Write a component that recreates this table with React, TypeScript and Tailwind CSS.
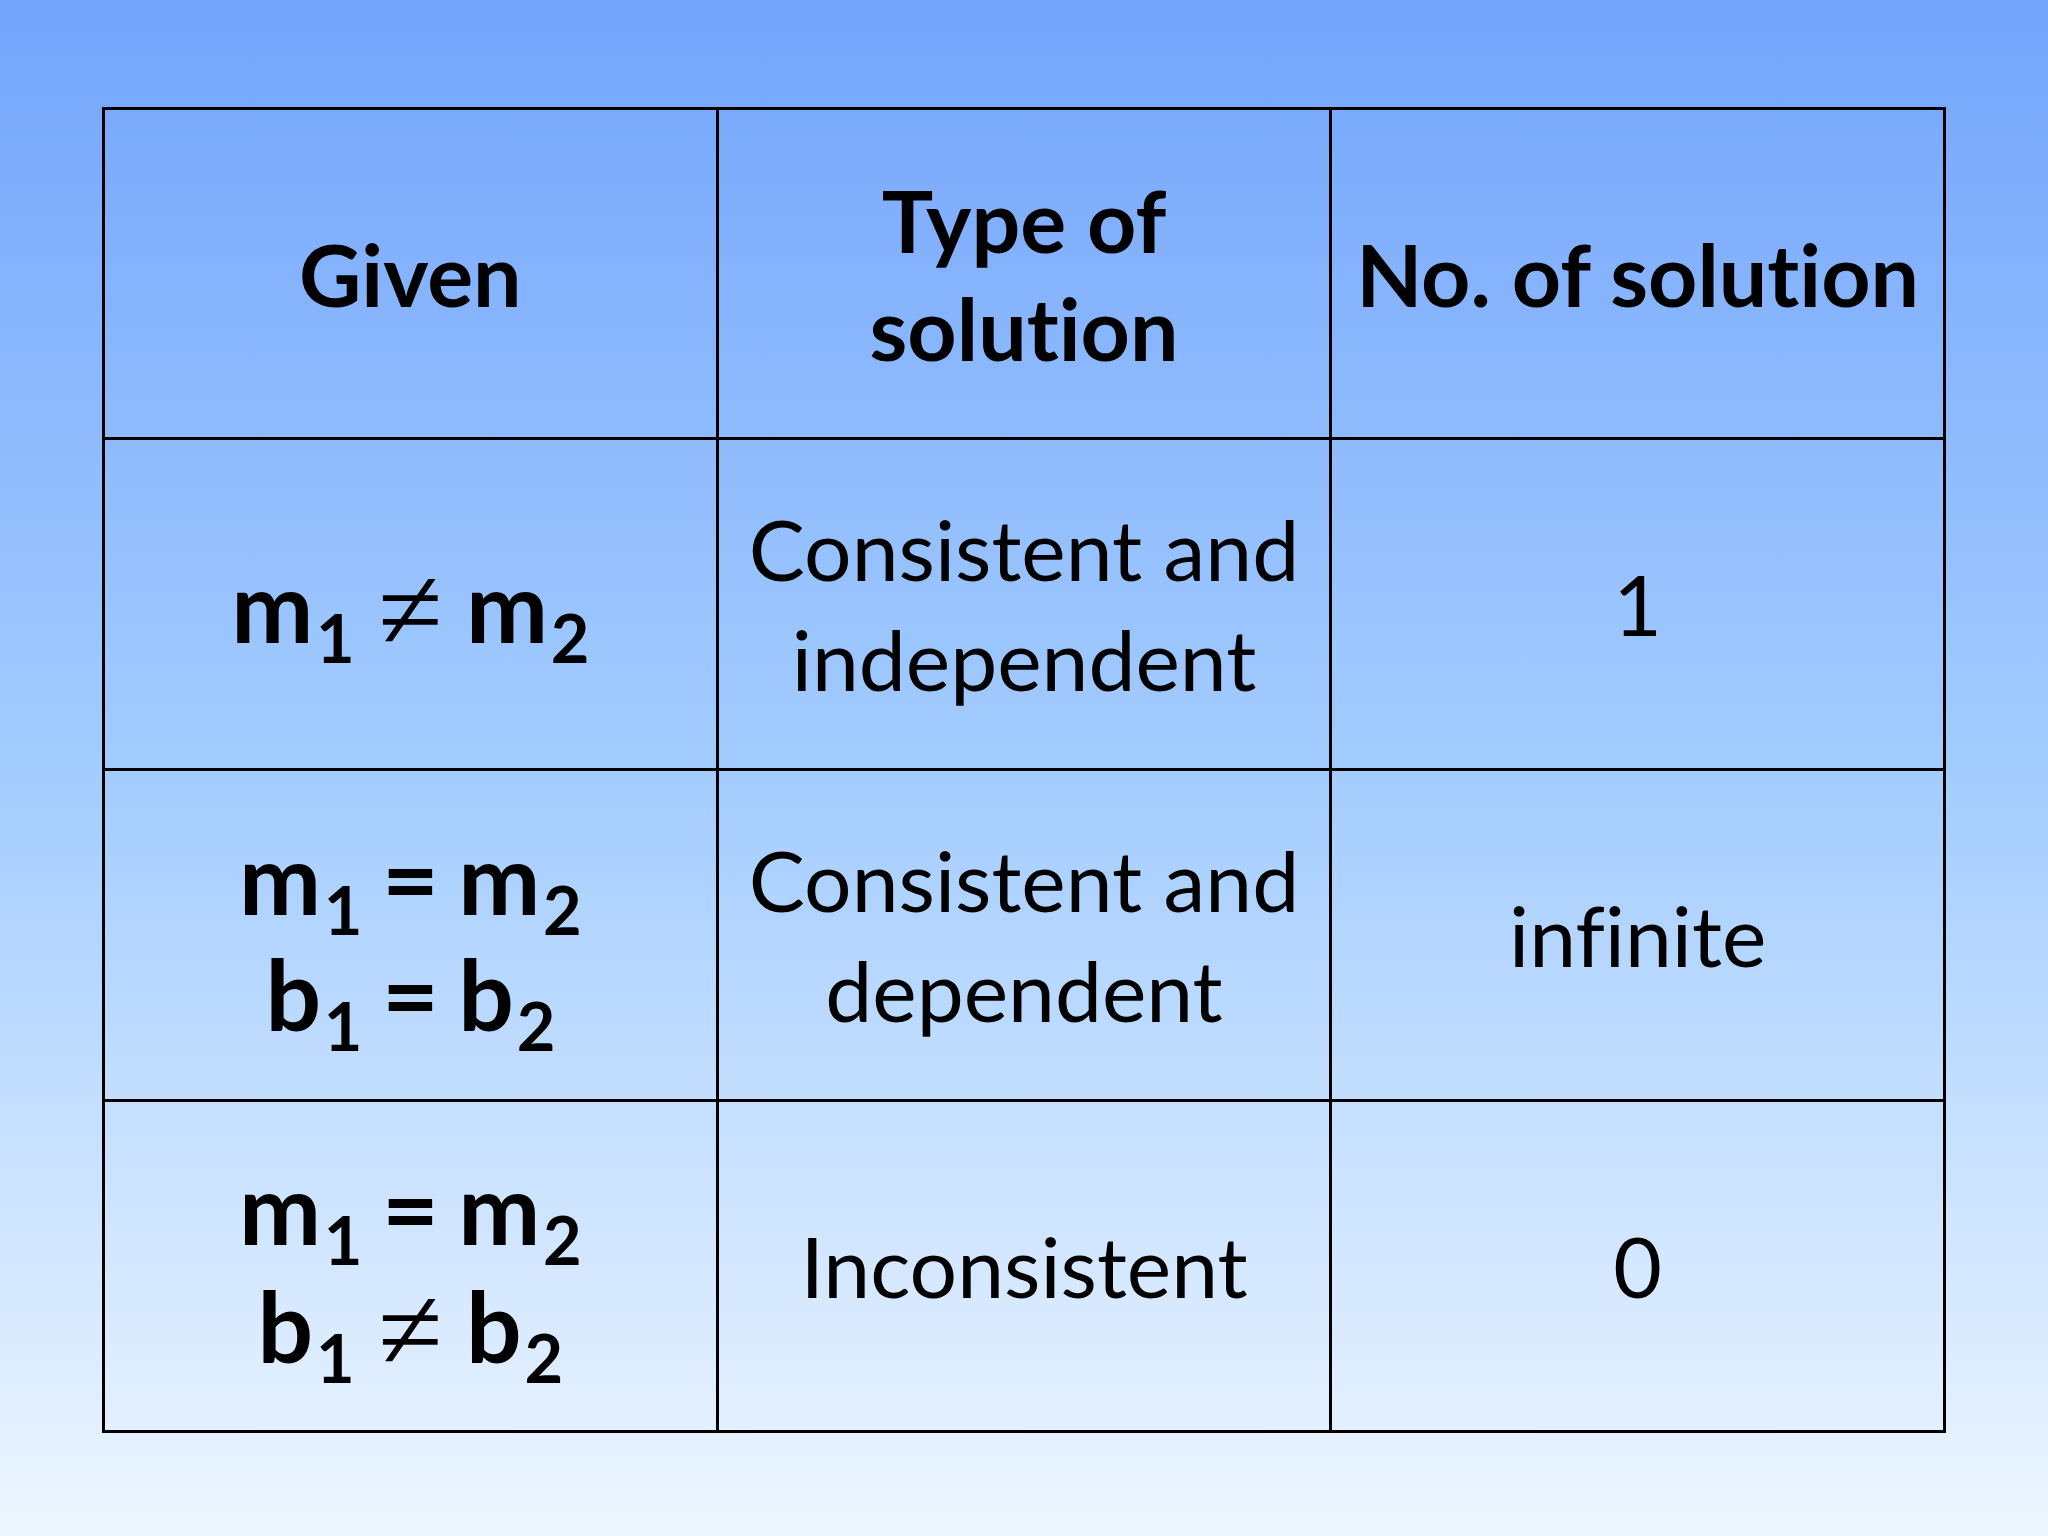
import React from 'react';

type Row = { given: React.ReactNode; type: string[]; count: string };

const Sub = ({ n }: { n: string }) => (
  <sub className="text-[68%] -bottom-[0.3em] font-bold ml-[0.04em]">{n}</sub>
);

function Expr({ a, op }: { a: string; op: string }) {
  return (
    <div className="whitespace-nowrap">
      {a}<Sub n="1" />
      {op === '≠' ? (
        <span
          className="font-normal mx-[0.2em] text-[1.2em] leading-none relative top-[0.05em]"
          style={{ fontFamily: '"Liberation Serif", serif' }}
        >
          ≠
        </span>
      ) : (
        <span className="mx-[0.2em]">=</span>
      )}
      {a}<Sub n="2" />
    </div>
  );
}

const rows: Row[] = [
  { given: <Expr a="m" op="≠" />, type: ['Consistent and', 'independent'], count: '1' },
  {
    given: (
      <>
        <Expr a="m" op="=" />
        <Expr a="b" op="=" />
      </>
    ),
    type: ['Consistent and', 'dependent'],
    count: 'infinite',
  },
  {
    given: (
      <>
        <Expr a="m" op="=" />
        <Expr a="b" op="≠" />
      </>
    ),
    type: ['Inconsistent'],
    count: '0',
  },
];

export default function App() {
  return (
    <div
      className="w-full h-[1536px] pt-[107px] bg-gradient-to-b from-[#74a4fb] via-[#a3ccfe] to-[#eef6ff] text-black [font-variant-ligatures:none]"
      style={{ fontFamily: 'Lato, "Open Sans", sans-serif' }}
    >
      <table className="mx-auto w-[1844px] table-fixed border-collapse border-[3px] border-black">
        <thead>
          <tr className="h-[330px]">
            <th className="border-[3px] border-black text-[86px] leading-[108px] font-bold text-center align-middle">Given</th>
            <th className="border-[3px] border-black text-[86px] leading-[108px] font-bold text-center align-middle">
              <div>Type of</div>
              <div>solution</div>
            </th>
            <th className="border-[3px] border-black text-[86px] leading-[108px] font-bold text-center align-middle whitespace-nowrap">No. of solution</th>
          </tr>
        </thead>
        <tbody>
          {rows.map((r, i) => (
            <tr key={i} className="h-[331px]">
              <td className="border-[3px] border-black text-center align-middle font-bold text-[98px] leading-[116px]">
                {r.given}
              </td>
              <td className="border-[3px] border-black text-center align-middle text-[84px] leading-[110px]">
                {r.type.map((t) => (
                  <div key={t}>{t}</div>
                ))}
              </td>
              <td className="border-[3px] border-black text-center align-middle text-[84px] leading-[110px]">
                {r.count}
              </td>
            </tr>
          ))}
        </tbody>
      </table>
    </div>
  );
}
